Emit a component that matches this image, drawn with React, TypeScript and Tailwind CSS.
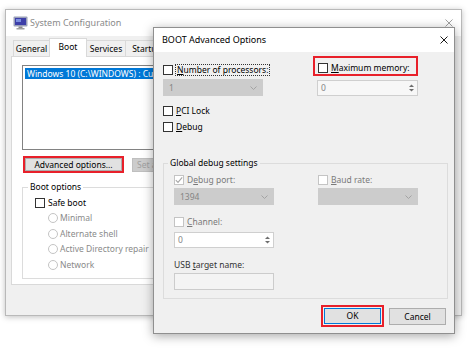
import clsx from "clsx";
import type { ReactNode } from "react";

function CloseX({ color }: { color: string }) {
  return (
    <svg width="8" height="8" viewBox="0 0 8 8" className="shrink-0">
      <path d="M0.5 0.5 L7.5 7.5 M7.5 0.5 L0.5 7.5" stroke={color} strokeWidth="1" />
    </svg>
  );
}

function Box({ checked, disabled }: { checked?: boolean; disabled?: boolean }) {
  return (
    <span
      className={clsx(
        "flex h-[10px] w-[10px] shrink-0 items-center justify-center border bg-white",
        disabled ? "border-[#c4c4c4]" : "border-[#333333]"
      )}
    >
      {checked ? (
        <svg width="8" height="8" viewBox="0 0 8 8">
          <path d="M0.8 4.2 L3 6.4 L7.2 1.4" fill="none" stroke="#a6a6a6" strokeWidth="1.1" />
        </svg>
      ) : null}
    </span>
  );
}

function CheckRow({
  children,
  checked,
  disabled,
  focus,
  className,
}: {
  children: ReactNode;
  checked?: boolean;
  disabled?: boolean;
  focus?: boolean;
  className?: string;
}) {
  return (
    <div className={clsx("flex h-[12px] items-center", className)}>
      <Box checked={checked} disabled={disabled} />
      <span
        className={clsx(
          "whitespace-nowrap",
          focus ? "ml-[2px] border border-dotted border-[#333] px-px leading-[10px]" : "ml-[3px]",
          disabled ? "text-[#7a7a7a]" : "text-black"
        )}
      >
        {children}
      </span>
    </div>
  );
}

function RadioRow({ children }: { children: ReactNode }) {
  return (
    <div className="flex h-[15.5px] items-center">
      <span className="h-[10px] w-[10px] shrink-0 rounded-full border border-[#c4c4c4] bg-white" />
      <span className="ml-[2px] text-[#8a8a8a]">{children}</span>
    </div>
  );
}

function Chevron() {
  return (
    <svg width="7" height="4" viewBox="0 0 7 4">
      <path d="M0.5 0.5 L3.5 3.5 L6.5 0.5" fill="none" stroke="#a3a3a3" strokeWidth="1" />
    </svg>
  );
}

function Combo({ value, className }: { value?: string; className?: string }) {
  return (
    <div
      className={clsx(
        "flex h-[17px] w-[100px] items-center justify-between border border-[#cccccc] bg-[#cccccc] pl-[5px] pr-[5px] text-[#858585]",
        className
      )}
    >
      <span>{value}</span>
      <Chevron />
    </div>
  );
}

function Spin({ value, className }: { value: string; className?: string }) {
  return (
    <div
      className={clsx(
        "flex h-[16px] items-center justify-between border border-[#cfcfcf] bg-[#f7f7f7] pl-[3px] pr-[3px] text-[#858585]",
        className
      )}
    >
      <span>{value}</span>
      <svg width="5" height="10" viewBox="0 0 5 10">
        <path d="M0 4 L2.5 1.5 L5 4Z" fill="#6e6e6e" />
        <path d="M0 6 L2.5 8.5 L5 6Z" fill="#6e6e6e" />
      </svg>
    </div>
  );
}

function MsconfigIcon() {
  return (
    <svg width="15" height="14" viewBox="0 0 15 14" className="shrink-0">
      <rect x="0.5" y="0.5" width="14" height="10" rx="1" fill="#9aa0b8" />
      <rect x="2" y="2" width="11" height="7" fill="#3d3fa8" />
      <rect x="3" y="3" width="5" height="3" fill="#7c8fe0" />
      <rect x="5.5" y="10.5" width="4" height="1.5" fill="#8a8a8a" />
      <rect x="3.5" y="12" width="8" height="1.5" fill="#a0a0a0" />
    </svg>
  );
}

const tabs = ["General", "Boot", "Services", "Startup", "Tools"];

function SystemConfiguration() {
  return (
    <div className="absolute left-[5px] top-[9px] z-0 flex h-[307px] w-[457px] flex-col border border-[#b9b9b9] bg-[#f0f0f0] shadow-[0_1px_6px_rgba(0,0,0,0.25)]">
      <div className="flex h-[26px] items-center bg-white pl-[7px] pr-[8px]">
        <MsconfigIcon />
        <span className="ml-[2px] text-[9px] text-[#8a8a8a]">System Configuration</span>
        <span className="ml-auto">
          <CloseX color="#a0a0a0" />
        </span>
      </div>
      <div className="relative z-10 -mb-px flex h-[21px] items-end pl-[7px]">
        {tabs.map((t, i) =>
          t === "Boot" ? (
            <div
              key={t}
              className="-ml-px flex h-[19px] w-[38px] items-start justify-center border border-b-0 border-[#d9d9d9] bg-white pt-[2px]"
            >
              {t}
            </div>
          ) : (
            <div
              key={t}
              className={clsx(
                "mb-px flex h-[16px] items-center justify-center border border-b-0 border-[#d9d9d9] bg-[#f0f0f0]",
                i > 0 && "-ml-px",
                t === "General" && "w-[37px]",
                t === "Services" && "w-[40px]",
                t === "Startup" && "w-[44px]",
                t === "Tools" && "w-[32px]"
              )}
            >
              {t}
            </div>
          )
        )}
      </div>
      <div className="ml-[5px] h-[229px] w-[440px] border border-[#d9d9d9] bg-white pl-[10px] pt-[8px]">
        <div className="h-[85px] w-[420px] border border-[#828282] bg-white p-[2px]">
          <div className="h-[11px] w-fit bg-[#0078d7] pl-[2px] pr-[4px] leading-[11px] text-white">
            Windows 10 (C:\WINDOWS) : Current OS; Default OS
          </div>
        </div>
        <div className="mt-[6px] flex items-start">
          <div className="ml-px h-[17px] w-[101px] border-2 border-[#e8202a]">
            <div className="flex h-full w-full items-center justify-center border border-[#adadad] bg-[#e1e1e1]">
              Advanced options...
            </div>
          </div>
          <div className="ml-[8px] mt-[2px] flex h-[14px] w-[64px] items-center justify-center border border-[#bfbfbf] bg-[#cccccc] text-[#a0a0a0]">
            Set as default
          </div>
        </div>
        <fieldset className="mt-[9px] h-[97px] w-[420px] border border-[#dcdcdc]">
          <legend className="ml-[5px] px-[2px] leading-[10px]">Boot options</legend>
          <div className="mt-[3px] pl-[12px]">
            <div className="flex h-[15.5px] items-center">
              <Box />
              <span className="ml-[3px]">Safe boot</span>
            </div>
            <div className="pl-[13px]">
              <RadioRow>Minimal</RadioRow>
              <RadioRow>Alternate shell</RadioRow>
              <RadioRow>Active Directory repair</RadioRow>
              <RadioRow>Network</RadioRow>
            </div>
          </div>
        </fieldset>
      </div>
    </div>
  );
}

function AdvancedOptions() {
  return (
    <div className="absolute left-[153px] top-[27px] z-20 flex h-[307px] w-[302px] flex-col border border-[#8f8f8f] bg-[#f0f0f0] shadow-[0_2px_10px_rgba(0,0,0,0.35)]">
      <div className="flex h-[24px] items-center bg-white pl-[8px] pr-[6px]">
        <span className="text-[9px]">BOOT Advanced Options</span>
        <span className="ml-auto">
          <CloseX color="#1a1a1a" />
        </span>
      </div>
      <div className="flex flex-1 flex-col pl-[9px] pr-[6px] pt-[4px]">
        <div className="flex h-[102px]">
          <div className="flex w-[150px] flex-col">
            <CheckRow focus className="mt-[8px]">
              <span className="underline underline-offset-1">N</span>umber of processors:
            </CheckRow>
            <Combo value="1" className="mt-[3px]" />
            <CheckRow className="mt-[8.5px]">
              <span className="underline underline-offset-1">P</span>CI Lock
            </CheckRow>
            <CheckRow className="mt-[4px]">
              <span className="underline underline-offset-1">D</span>ebug
            </CheckRow>
          </div>
          <div className="flex flex-col">
            <div className="h-[20px] w-[105px] border-2 border-[#e8202a] pl-[3px] pt-[4px]">
              <CheckRow>
                <span className="underline underline-offset-1">M</span>aximum memory:
              </CheckRow>
            </div>
            <Spin value="0" className="ml-[4px] mt-[4px] w-[101px]" />
          </div>
        </div>
        <fieldset className="h-[141px] w-[285px] border border-[#dcdcdc]">
          <legend className="ml-[4px] px-[2px] leading-[10px]">Global debug settings</legend>
          <div className="flex pl-[10px]">
            <div className="flex w-[144px] flex-col">
              <CheckRow checked disabled className="mt-[6px]">
                D<span className="underline underline-offset-1">e</span>bug port:
              </CheckRow>
              <Combo value="1394" className="mt-[2px]" />
              <CheckRow disabled className="mt-[11px]">
                <span className="underline underline-offset-1">C</span>hannel:
              </CheckRow>
              <Spin value="0" className="mt-[4px] w-[100px] bg-white" />
              <div className="mt-[11px] h-[12px] text-[#333333]">
                USB <span className="underline underline-offset-1">t</span>arget name:
              </div>
              <div className="mt-[2px] h-[17px] w-[100px] border border-[#cccccc] bg-[#f4f4f4]" />
            </div>
            <div className="flex flex-col">
              <CheckRow disabled className="mt-[6px]">
                <span className="underline underline-offset-1">B</span>aud rate:
              </CheckRow>
              <Combo className="mt-[2px]" />
            </div>
          </div>
        </fieldset>
        <div className="mt-[6px] flex items-start justify-end gap-[5px] pr-[2px]">
          <div className="h-[22px] w-[63px] border-2 border-[#e8202a] p-px">
            <div className="flex h-[16px] w-[57px] items-center justify-center border border-[#0078d7] bg-[#e1e1e1]">
              OK
            </div>
          </div>
          <div className="mt-[3px] flex h-[17px] w-[57px] items-center justify-center border border-[#adadad] bg-[#e1e1e1]">
            Cancel
          </div>
        </div>
      </div>
    </div>
  );
}

export default function App() {
  return (
    <div className="relative h-[349px] w-[474px] overflow-hidden bg-white font-['Noto_Sans',sans-serif] text-[8.5px] leading-[12px] text-black">
      <SystemConfiguration />
      <AdvancedOptions />
    </div>
  );
}
